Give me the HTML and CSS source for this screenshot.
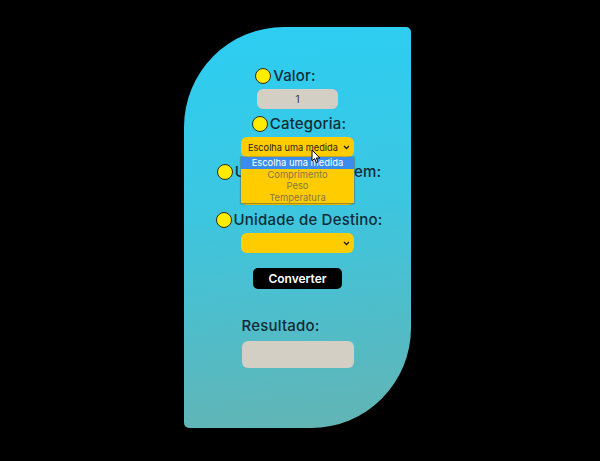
FILE: index.html
```html
<!DOCTYPE html>
<html lang="pt-BR">
<head>
<meta charset="utf-8">
<title>Conversor</title>
<link rel="stylesheet" href="styles.css">
</head>
<body>
<main class="card">
  <div class="group">
    <div class="row row-valor"><span class="dot"></span><span class="label">Valor:</span></div>
    <div class="input">1</div>
  </div>
  <div class="group">
    <div class="row"><span class="dot"></span><span class="label">Categoria:</span></div>
    <div class="select"><span class="select-text">Escolha uma medida</span><svg class="chev" width="7" height="5" viewBox="0 0 7 5"><path d="M1 1 L3.5 3.5 L6 1" fill="none" stroke="#222" stroke-width="1.4"/></svg></div>
  </div>
  <div class="group">
    <div class="row"><span class="dot"></span><span class="label">Unidade de Origem:</span></div>
    <div class="select"><span class="select-text"></span><svg class="chev" width="7" height="5" viewBox="0 0 7 5"><path d="M1 1 L3.5 3.5 L6 1" fill="none" stroke="#222" stroke-width="1.4"/></svg></div>
  </div>
  <div class="group">
    <div class="row"><span class="dot"></span><span class="label">Unidade de Destino:</span></div>
    <div class="select"><span class="select-text"></span><svg class="chev" width="7" height="5" viewBox="0 0 7 5"><path d="M1 1 L3.5 3.5 L6 1" fill="none" stroke="#222" stroke-width="1.4"/></svg></div>
  </div>
  <button class="btn">Converter</button>
  <div class="result-group">
    <div class="label result-label">Resultado:</div>
    <div class="result-box"></div>
  </div>

  <ul class="menu">
    <li class="opt active">Escolha uma medida</li>
    <li class="opt">Comprimento</li>
    <li class="opt">Peso</li>
    <li class="opt">Temperatura</li>
  </ul>
  <svg class="cursor" width="10" height="15" viewBox="0 0 10 15"><path d="M1 1 L1 12 L3.6 9.6 L5.4 13.6 L7 12.9 L5.3 9 L8.8 9 Z" fill="#fff" stroke="#000" stroke-width="1" stroke-linejoin="round"/></svg>
</main>
</body>
</html>
```
FILE: styles.css
```css
html, body {
  margin: 0;
  padding: 0;
  background: #000;
}
body {
  width: 600px;
  height: 461px;
  overflow: hidden;
  font-family: Inter, "Noto Sans", sans-serif;
  color: #0f2c36;
}
.card {
  position: relative;
  box-sizing: border-box;
  width: 227px;
  height: 401px;
  margin: 27px 0 0 184px;
  padding-top: 41px;
  border-radius: 100px 5px 100px 5px;
  background: linear-gradient(175deg, #2ccef3 0%, #3cc6e0 45%, #63b4b3 100%);
  display: flex;
  flex-direction: column;
  align-items: center;
}
.group {
  display: flex;
  flex-direction: column;
  align-items: center;
  margin-bottom: 7px;
}
.row {
  display: flex;
  align-items: center;
  gap: 2px;
  height: 16px;
  margin-left: 3px;
}
.row-valor {
  margin-left: 0;
  margin-right: 24px;
}
.dot {
  box-sizing: border-box;
  width: 16px;
  height: 16px;
  border-radius: 50%;
  background: #ffec00;
  border: 1.5px solid #2b2b22;
}
.label {
  font-size: 15px;
  font-weight: 500;
  letter-spacing: 0.2px;
  line-height: 16px;
}
.input {
  box-sizing: border-box;
  width: 81px;
  height: 20px;
  margin-top: 5px;
  border-radius: 6px;
  background: #d3cfc5;
  font-size: 10px;
  line-height: 20px;
  text-align: center;
  color: #333;
}
.select {
  box-sizing: border-box;
  width: 113px;
  height: 20px;
  margin-top: 5px;
  border-radius: 6px;
  background: #ffcc00;
  display: flex;
  align-items: center;
  justify-content: space-between;
  padding: 0 4px 0 7px;
}
.select-text {
  font-size: 9.2px;
  color: #2a2412;
}
.chev {
  display: block;
}
.btn {
  box-sizing: border-box;
  width: 89px;
  height: 21px;
  margin-top: 8px;
  border: 0;
  border-radius: 5px;
  background: #000;
  color: #fff;
  font-family: Inter, "Noto Sans", sans-serif;
  font-size: 12px;
  font-weight: 600;
  padding: 0;
}
.result-group {
  width: 112px;
  margin-top: 28px;
}
.result-label {
  line-height: 18px;
  height: 18px;
}
.result-box {
  height: 27px;
  margin-top: 6px;
  border-radius: 6px;
  background: #d3cfc5;
}
.menu {
  position: absolute;
  left: 57px;
  top: 130px;
  width: 113px;
  margin: 0;
  padding: 0;
  list-style: none;
  background: #ffcc00;
  box-shadow: 0 1px 2px rgba(0,0,0,0.35);
  outline: 1px solid rgba(120,110,80,0.35);
}
.opt {
  height: 11.5px;
  line-height: 11.5px;
  font-size: 9.4px;
  text-align: center;
  color: #86774a;
}
.opt.active {
  background: #3a8ded;
  color: #fff;
}
.cursor {
  position: absolute;
  left: 127px;
  top: 122px;
}
```
